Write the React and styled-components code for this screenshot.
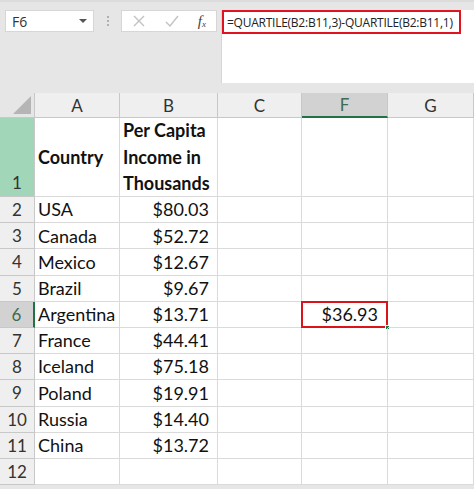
import React from 'react'
import styled, { createGlobalStyle } from 'styled-components'

const rows = [
  ['USA', '$80.03'],
  ['Canada', '$52.72'],
  ['Mexico', '$12.67'],
  ['Brazil', '$9.67'],
  ['Argentina', '$13.71'],
  ['France', '$44.41'],
  ['Iceland', '$75.18'],
  ['Poland', '$19.91'],
  ['Russia', '$14.40'],
  ['China', '$13.72'],
  ['', ''],
]

const App = () => {
  return (
    <Page>
      <GlobalStyle />
      <Toolbar>
        <NameBox>
          <span>F6</span>
          <Caret />
        </NameBox>
        <Dots>
          <i />
          <i />
          <i />
        </Dots>
        <IconBox>
          <svg width="14" height="14" viewBox="0 0 14 14">
            <path d="M2 2 L12 12 M12 2 L2 12" stroke="#c2c2c2" strokeWidth="1.4" fill="none" />
          </svg>
          <svg width="16" height="14" viewBox="0 0 16 14">
            <path d="M2 8 L6 12 L14 2" stroke="#c2c2c2" strokeWidth="1.4" fill="none" />
          </svg>
          <Fx>
            f<sub>x</sub>
          </Fx>
        </IconBox>
        <FormulaArea>
          <FormulaText>=QUARTILE(B2:B11,3)-QUARTILE(B2:B11,1)</FormulaText>
        </FormulaArea>
      </Toolbar>

      <Sheet>
        <Corner>
          <svg width="20" height="20" viewBox="0 0 20 20">
            <polygon points="19,1 19,19 1,19" fill="#b5b5b5" />
          </svg>
        </Corner>
        <ColHead>A</ColHead>
        <ColHead>B</ColHead>
        <ColHead>C</ColHead>
        <ColHead $active>F</ColHead>
        <ColHead>G</ColHead>

        <RowHead $tall $green>1</RowHead>
        <Cell $tall $bold $center>Country</Cell>
        <Cell $tall $bold>
          Per Capita
          <br />
          Income in
          <br />
          Thousands
        </Cell>
        <Cell $tall />
        <Cell $tall />
        <Cell $tall />

        {rows.map(([country, income], i) => {
          const n = i + 2
          const active = n === 6
          return (
            <React.Fragment key={n}>
              <RowHead $active={active}>{n}</RowHead>
              <Cell>{country}</Cell>
              <Cell $right>{income}</Cell>
              <Cell />
              <Cell $right $selected={active}>
                {active && '$36.93'}
                {active && <Handle />}
              </Cell>
              <Cell />
            </React.Fragment>
          )
        })}
      </Sheet>
    </Page>
  )
}

const GlobalStyle = createGlobalStyle`
  html, body {
    margin: 0;
    padding: 0;
    background: #e6e6e6;
  }
  * {
    box-sizing: border-box;
  }
`

const Page = styled.div`
  width: 474px;
  height: 489px;
  overflow: hidden;
  background: #e6e6e6;
  font-family: Lato, "Open Sans", sans-serif;
  color: #111;
`

const Toolbar = styled.div`
  height: 93px;
  display: flex;
  align-items: flex-start;
  padding-top: 10px;
  border-top: 2px solid #dcdcdc;
`

const NameBox = styled.div`
  width: 89px;
  height: 22px;
  margin-left: 5px;
  margin-top: -2px;
  background: #fff;
  border: 1px solid #d6d6d6;
  display: flex;
  align-items: center;
  justify-content: space-between;
  padding: 0 6px 0 6px;
  font-family: "Open Sans", sans-serif;
  font-size: 14px;
  color: #333;
`

const Caret = styled.span`
  width: 0;
  height: 0;
  border-left: 4px solid transparent;
  border-right: 4px solid transparent;
  border-top: 4px solid #555;
`

const Dots = styled.div`
  width: 27px;
  height: 22px;
  margin-top: -2px;
  display: flex;
  flex-direction: column;
  align-items: center;
  justify-content: center;
  gap: 2px;

  i {
    width: 2px;
    height: 2px;
    background: #b0b0b0;
  }
`

const IconBox = styled.div`
  width: 96px;
  height: 22px;
  margin-top: -2px;
  background: #fff;
  border: 1px solid #d6d6d6;
  display: flex;
  align-items: center;
  justify-content: space-between;
  padding: 0 10px 0 10px;
`

const Fx = styled.span`
  font-family: "Liberation Serif", serif;
  font-style: italic;
  font-size: 15px;
  color: #444;
  line-height: 1;

  sub {
    font-size: 9px;
    vertical-align: -1px;
  }
`

const FormulaArea = styled.div`
  flex: 1;
  height: 73px;
  margin-left: 4px;
  margin-top: -2px;
  background: #fff;
  border-left: 1px solid #d6d6d6;
`

const FormulaText = styled.div`
  width: 239px;
  height: 24px;
  border: 2px solid #e0141e;
  display: flex;
  align-items: center;
  padding-left: 3px;
  font-family: "Open Sans", sans-serif;
  font-size: 12px;
  letter-spacing: -0.25px;
  color: #222;
  white-space: nowrap;
`

const Sheet = styled.div`
  display: grid;
  grid-template-columns: 35px 85px 98px 84px 86px 86px;
  grid-template-rows: 25px 79px repeat(11, 26.2px);
  background: #fff;
`

const Corner = styled.div`
  background: #e6e6e6;
  border-bottom: 1px solid #c8c8c8;
  border-right: 1px solid #c8c8c8;
  display: flex;
  align-items: flex-end;
  justify-content: flex-end;
  padding: 0 2px 2px 0;
`

const ColHead = styled.div`
  background: ${p => (p.$active ? '#d2d2d2' : '#efefef')};
  border-right: 1px solid #c8c8c8;
  border-bottom: ${p => (p.$active ? '2px solid #217346' : '1px solid #c8c8c8')};
  display: flex;
  align-items: center;
  justify-content: center;
  font-size: 17px;
  color: ${p => (p.$active ? '#3f6b52' : '#333')};
`

const RowHead = styled.div`
  background: ${p => (p.$green ? '#a2d6b8' : p.$active ? '#d2d2d2' : '#efefef')};
  border-bottom: 1px solid #c8c8c8;
  border-right: ${p => (p.$active ? '2px solid #217346' : '1px solid #c8c8c8')};
  display: flex;
  align-items: ${p => (p.$tall ? 'flex-end' : 'center')};
  justify-content: center;
  padding-bottom: ${p => (p.$tall ? '3px' : '0')};
  font-size: 17px;
  color: ${p => (p.$active ? '#3f6b52' : '#333')};
`

const Cell = styled.div`
  position: relative;
  border-right: 1px solid #dadada;
  border-bottom: 1px solid #dadada;
  display: flex;
  align-items: center;
  justify-content: ${p => (p.$right ? 'flex-end' : 'flex-start')};
  padding: ${p => (p.$right ? '0 8px 0 0' : '0 0 0 3px')};
  font-size: 18px;
  font-weight: ${p => (p.$bold ? 700 : 400)};
  line-height: 26.5px;
  color: #111;
  white-space: nowrap;
  ${p =>
    p.$selected &&
    `
    border: 2px solid #d9141b;
    margin: -1px 0 0 -1px;
  `}
`

const Handle = styled.span`
  position: absolute;
  right: -4px;
  bottom: -4px;
  width: 5px;
  height: 5px;
  background: #217346;
  border: 1px solid #fff;
`

export default App
